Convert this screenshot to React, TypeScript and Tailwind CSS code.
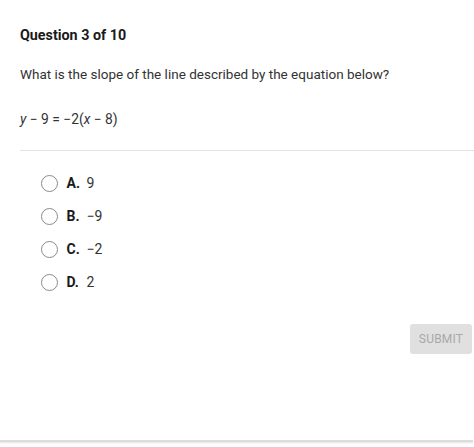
import React, { useState } from 'react';

const options = [
  { letter: 'A.', value: '9' },
  { letter: 'B.', value: '−9' },
  { letter: 'C.', value: '−2' },
  { letter: 'D.', value: '2' },
];

export default function App() {
  const [selected, setSelected] = useState<number | null>(null);

  return (
    <div className="w-[474px] h-[447px] bg-white relative overflow-hidden font-['Roboto',sans-serif] text-[#212121]">
      <div className="pl-5 pt-[26px]">
        {/* Header */}
        <h2 className="text-[14.3px] font-bold leading-[18px] text-[#1a1a1a]">Question 3 of 10</h2>

        <p className="mt-[21px] text-[13.5px] leading-[18px] text-[#333]">
          What is the slope of the line described by the equation below?
        </p>

        <p className="mt-[27px] text-[13.8px] leading-[18px] text-[#333]">
          <i>y</i> − 9 = −2(<i>x</i> − 8)
        </p>

        <div className="mt-[22px] h-px bg-[#e2e2e2]" />

        {/* Choices */}
        <div className="mt-[23px] pl-5 flex flex-col gap-[15px]">
          {options.map((o, i) => (
            <button
              key={o.letter}
              onClick={() => setSelected(i)}
              className="flex items-center h-[18px] text-left"
            >
              <span className="ml-[0.5px] w-[17px] h-[17px] rounded-full border border-[#8a8a8a] flex items-center justify-center">
                {selected === i && <span className="w-2 h-2 rounded-full bg-[#555]" />}
              </span>
              <span className="ml-[9px] text-[14px] font-bold text-[#1a1a1a] w-[20px]">{o.letter}</span>
              <span className="text-[14px] text-[#333]">{o.value}</span>
            </button>
          ))}
        </div>
      </div>

      <div className="flex justify-end mt-[33px] pr-[2px]">
        <button className="w-[62px] h-[30px] rounded-[3px] bg-[#e0e0e0] text-[#a8a8a8] text-[12px] tracking-[0.2px] uppercase">
          Submit
        </button>
      </div>

      <div className="absolute left-0 right-[1px] top-[440px] h-[2px] bg-[#dcdcdc] shadow-[0_1px_2px_rgba(0,0,0,0.12)]" />
    </div>
  );
}
